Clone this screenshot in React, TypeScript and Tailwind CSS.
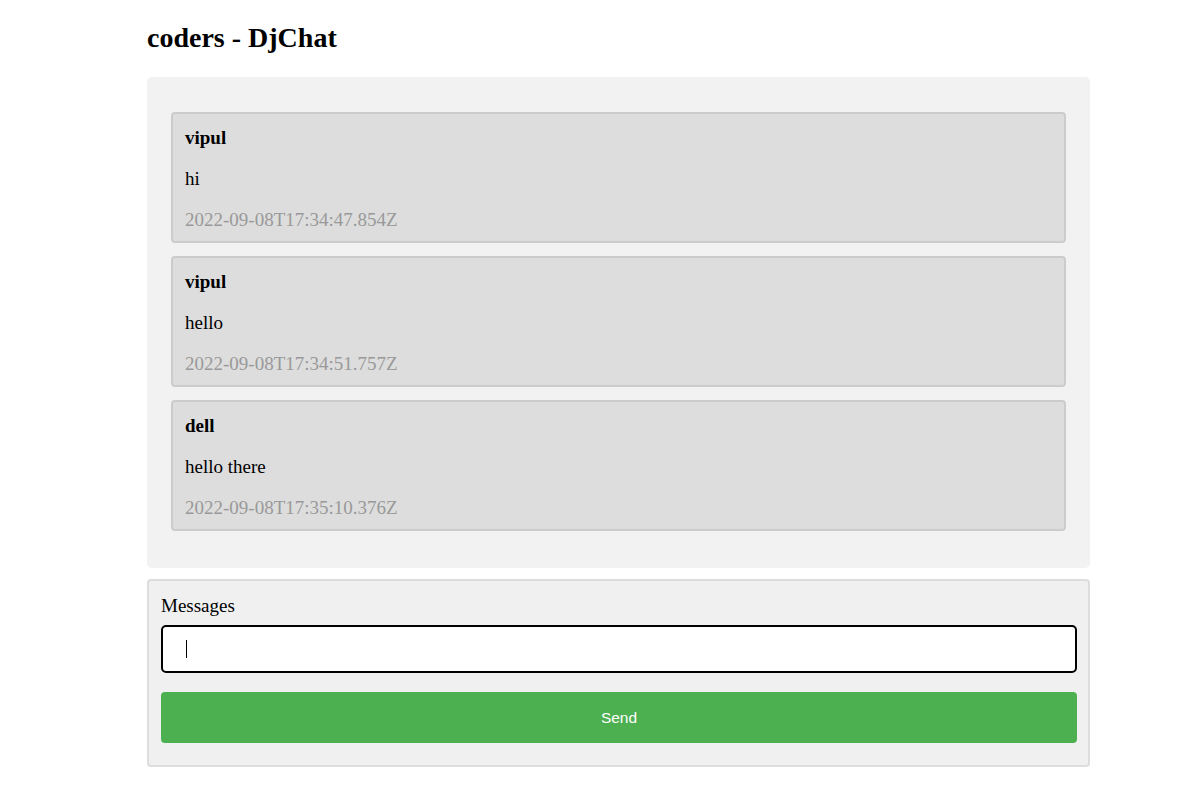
import { useState } from "react";

const messages = [
  { user: "vipul", text: "hi", time: "2022-09-08T17:34:47.854Z" },
  { user: "vipul", text: "hello", time: "2022-09-08T17:34:51.757Z" },
  { user: "dell", text: "hello there", time: "2022-09-08T17:35:10.376Z" },
];

export default function App() {
  const [value, setValue] = useState("");

  return (
    <div className="min-h-screen bg-white text-black font-['Liberation_Serif','Times_New_Roman',serif] text-[19px] leading-[22px]">
      <div className="ml-[147px] w-[943px]">
        <h2 className="pt-[22px] pb-[24px] text-[28px] leading-[31px] font-bold">
          coders - DjChat
        </h2>

        {/* chat log */}
        <div className="bg-[#f2f2f2] rounded-[5px] pt-[35px] pb-[37px] px-[24px] flex flex-col gap-[13px]">
          {messages.map((m, i) => (
            <div
              key={i}
              className="bg-[#dddddd] border-2 border-[#cccccc] rounded-[4px] pt-[13px] pb-[10px] px-[12px] flex flex-col gap-[19px]"
            >
              <p className="font-bold">{m.user}</p>
              <p>{m.text}</p>
              <p className="text-[#999999]">{m.time}</p>
            </div>
          ))}
        </div>

        {/* form */}
        <form
          onSubmit={(e) => e.preventDefault()}
          className="mt-[11px] bg-[#f0f0f0] border-2 border-[#dddddd] rounded-[4px] pt-[14px] pb-[22px] pl-[12px] pr-[11px]"
        >
          <label className="block">Messages</label>
          <div className="relative mt-[8px]">
            <input
              type="text"
              value={value}
              onChange={(e) => setValue(e.target.value)}
              className="block w-full h-[48px] bg-white border-2 border-black rounded-[5px] px-[23px] outline-none caret-transparent"
            />
            {value === "" && (
              <span className="absolute left-[25px] top-[15px] w-px h-[18px] bg-black" />
            )}
          </div>
          <button
            type="submit"
            className="mt-[19px] block w-full h-[51px] bg-[#4caf50] text-white rounded-[4px] font-['Liberation_Sans',Arial,sans-serif] text-[15.5px]"
          >
            Send
          </button>
        </form>
      </div>
    </div>
  );
}
